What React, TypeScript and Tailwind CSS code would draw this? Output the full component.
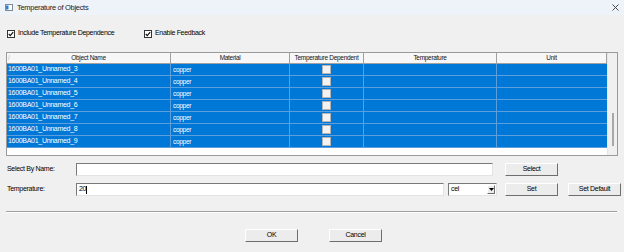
import React from "react";

const rows = [3, 4, 5, 6, 7, 8, 9].map((n) => ({
  name: `1600BA01_Unnamed_${n}`,
  material: "copper",
}));

// column widths of the grid, in px
const cols = ["w-[164px]", "w-[119px]", "w-[74px]", "w-[133px]", "w-[110px]"];
const heads = ["Object Name", "Material", "Temperature Dependent", "Temperature", "Unit"];

function Check() {
  return (
    <svg width="8" height="8" viewBox="0 0 8 8" className="shrink-0">
      <rect x="0.5" y="0.5" width="7" height="7" fill="#fff" stroke="#333" />
      <path d="M1.8 4 L3.3 5.6 L6.2 2.2" fill="none" stroke="#111" strokeWidth="1.2" />
    </svg>
  );
}

function Btn({ label, className = "" }: { label: string; className?: string }) {
  return (
    <div
      className={
        "h-[13px] w-[53px] flex items-center justify-center bg-[#ececec] border border-t-white border-l-white border-r-[#6e6e6e] border-b-[#6e6e6e] text-[7px] text-black " +
        className
      }
    >
      {label}
    </div>
  );
}

function Input({ value = "", className = "" }: { value?: string; className?: string }) {
  return (
    <div
      className={
        "h-[13px] bg-white border border-t-[#7a7a7a] border-l-[#7a7a7a] border-r-[#e3e3e3] border-b-[#e3e3e3] flex items-center pl-[2px] text-[7px] text-black " +
        className
      }
    >
      {value}
      {value && <span className="w-px h-[8px] bg-black" />}
    </div>
  );
}

export default function App() {
  return (
    <div
      className="w-[624px] h-[252px] bg-[#f0f0f0] flex flex-col overflow-hidden text-black tracking-[-0.3px]"
      style={{ fontFamily: '"Liberation Sans", Arial, sans-serif' }}
    >
      {/* Barra de título */}
      <div className="h-[15px] bg-[#eef3fa] flex items-center pl-[5px] pr-[3px]">
        <svg width="8" height="7" viewBox="0 0 8 7" className="shrink-0">
          <rect x="0.5" y="0.5" width="7" height="6" fill="#fff" stroke="#7d8a99" />
          <rect x="1" y="1.5" width="2.5" height="4" fill="#2f7fd0" />
        </svg>
        <span className="ml-[4px] text-[7.5px] text-[#222]">Temperature of Objects</span>
        <svg width="7" height="7" viewBox="0 0 7 7" className="ml-auto mr-[2px]">
          <path d="M0.5 0.5 L6.5 6.5 M6.5 0.5 L0.5 6.5" stroke="#444" strokeWidth="1" />
        </svg>
      </div>

      {/* Opciones */}
      <div className="flex items-center h-[9px] mt-[14px] pl-[7px]">
        <div className="w-[137px] flex items-center">
          <Check />
          <span className="ml-[3px] text-[7px]">Include Temperature Dependence</span>
        </div>
        <Check />
        <span className="ml-[3px] text-[7px]">Enable Feedback</span>
      </div>

      {/* Tabla */}
      <div className="ml-[6px] mt-[14px] w-[612px] h-[104px] border border-[#9a9a9a] bg-white flex">
        <div className="w-[600px] flex flex-col">
          <div className="flex h-[11px] bg-[#f7f7f7] border-b border-[#a0a0a0]">
            {heads.map((h, i) => (
              <div
                key={h}
                className={
                  cols[i] +
                  " relative border-r border-[#a0a0a0] flex items-center justify-center text-[6.5px] text-[#111] whitespace-nowrap overflow-hidden"
                }
              >
                {i === 0 && <span className="absolute left-[1px] text-[#bbb] text-[7px]">/</span>}
                {h}
              </div>
            ))}
          </div>
          {rows.map((r) => (
            <div key={r.name} className="flex h-[12px] bg-[#0078d7] border-b border-[#5d9fdc]">
              <div className={cols[0] + " border-r border-[#5d9fdc] flex items-center pl-[1px] text-[7px] text-white whitespace-nowrap"}>
                {r.name}
              </div>
              <div className={cols[1] + " border-r border-[#5d9fdc] flex items-center pl-[2px] text-[6.5px] text-white"}>
                {r.material}
              </div>
              <div className={cols[2] + " border-r border-[#5d9fdc] flex items-center justify-center"}>
                <div className="w-[9px] h-[9px] bg-[#f2f2f2] border border-[#b5b5b5]" />
              </div>
              <div className={cols[3] + " border-r border-[#5d9fdc]"} />
              <div className={cols[4]} />
            </div>
          ))}
        </div>
        <div className="w-[10px] bg-[#f0f0f0] border-l border-[#e6e6e6] flex flex-col justify-end items-center pb-[9px]">
          <div className="w-[2px] h-[33px] bg-[#a8a8a8]" />
        </div>
      </div>

      {/* Seleccionar por nombre */}
      <div className="flex items-center mt-[7px] pl-[7px]">
        <span className="w-[69px] text-[7px]">Select By Name:</span>
        <Input className="w-[417px]" />
        <Btn label="Select" className="ml-[12px]" />
      </div>

      {/* Temperatura */}
      <div className="flex items-center mt-[7px] pl-[7px]">
        <span className="w-[69px] text-[7px]">Temperature:</span>
        <Input value="20" className="w-[368px]" />
        <div className="ml-[4px] w-[49px] h-[13px] bg-white border border-t-[#7a7a7a] border-l-[#7a7a7a] border-r-[#e3e3e3] border-b-[#e3e3e3] flex items-center text-[7px]">
          <span className="pl-[2px] flex-1">cel</span>
          <div className="w-[8px] h-[9px] mr-[1px] bg-[#ececec] border border-t-white border-l-white border-r-[#6e6e6e] border-b-[#6e6e6e] flex items-center justify-center">
            <svg width="5" height="3" viewBox="0 0 5 3">
              <path d="M0 0 H5 L2.5 3 Z" fill="#000" />
            </svg>
          </div>
        </div>
        <Btn label="Set" className="ml-[8px]" />
        <Btn label="Set Default" className="ml-[10px]" />
      </div>

      {/* Separador */}
      <div className="ml-[6px] mt-[15px] w-[611px] border-t border-[#a0a0a0] border-b border-b-white" />

      {/* Botones */}
      <div className="flex mt-[16px] pl-[245px]">
        <Btn label="OK" className="border-[#3a3a3a]" />
        <Btn label="Cancel" className="ml-[31px]" />
      </div>
    </div>
  );
}
